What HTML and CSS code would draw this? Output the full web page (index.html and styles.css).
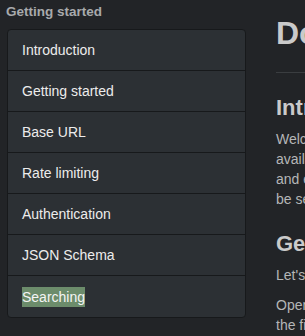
FILE: index.html
```html
<!DOCTYPE html>
<html lang="en">
<head>
    <meta charset="UTF-8">
    <meta name="viewport" content="width=device-width, initial-scale=1.0">
    <title>API Docs</title>
    <link rel="stylesheet" href="styles.css">
</head>
<body>
    <div class="layout">
        <aside class="sidebar">
            <h3 class="sidebar-title">Getting started</h3>
            <ul class="nav-list">
                <li class="nav-item">Introduction</li>
                <li class="nav-item">Getting started</li>
                <li class="nav-item">Base URL</li>
                <li class="nav-item">Rate limiting</li>
                <li class="nav-item">Authentication</li>
                <li class="nav-item">JSON Schema</li>
                <li class="nav-item"><mark class="search-hit">Searching</mark></li>
            </ul>
        </aside>

        <main class="content">
            <h1>Documentation</h1>

            <h2>Introduction</h2>
            <p>Welcome to the API reference. Every endpoint that is<br>
            available to you is listed here, together with its parameters<br>
            and example responses. All requests to the API should<br>
            be sent over HTTPS.</p>

            <h2>Getting started</h2>
            <p>Let's make a first request to the API.</p>
            <p>Open a terminal and run the command below to fetch<br>
            the first page of results.</p>
        </main>
    </div>
</body>
</html>
```

FILE: styles.css
```css
* {
    box-sizing: border-box;
    margin: 0;
    padding: 0;
}

html, body {
    overflow: hidden;
}

body {
    font-family: 'Liberation Sans', Arial, sans-serif;
    background-color: #222427;
    color: #b5b6b7;
    min-height: 100vh;
}

.layout {
    display: flex;
    align-items: flex-start;
    width: 760px;
}

.sidebar {
    flex: 0 0 246px;
    padding-left: 6px;
}

.sidebar-title {
    font-size: 13.5px;
    font-weight: bold;
    color: #a8aaac;
    line-height: 16px;
    padding-top: 4px;
    margin-bottom: 9px;
}

.nav-list {
    list-style: none;
    margin-left: 1px;
    background-color: #2c3034;
    border: 1px solid #17191b;
    border-radius: 4px;
}

.nav-item {
    height: 41px;
    display: flex;
    align-items: center;
    padding-left: 14px;
    font-size: 14px;
    color: #ececec;
    border-bottom: 1px solid #17191b;
}

.nav-item:last-child {
    border-bottom: none;
}

.search-hit {
    background-color: #6c8c6b;
    color: #f4f4f4;
    display: inline-block;
    line-height: 20px;
}

.content {
    flex: 1;
    margin-left: 30px;
}

.content h1 {
    font-size: 32px;
    color: #cacaca;
    line-height: 38px;
    margin-top: 14px;
    padding-bottom: 20px;
    border-bottom: 1px solid #3a3d40;
}

.content h2 {
    font-size: 22px;
    color: #cacaca;
    line-height: 26px;
    margin-top: 22px;
    margin-bottom: 8px;
}

.content p + h2 {
    margin-top: 22px;
}

.content p {
    font-size: 14px;
    line-height: 20px;
    margin-bottom: 10px;
}
```
